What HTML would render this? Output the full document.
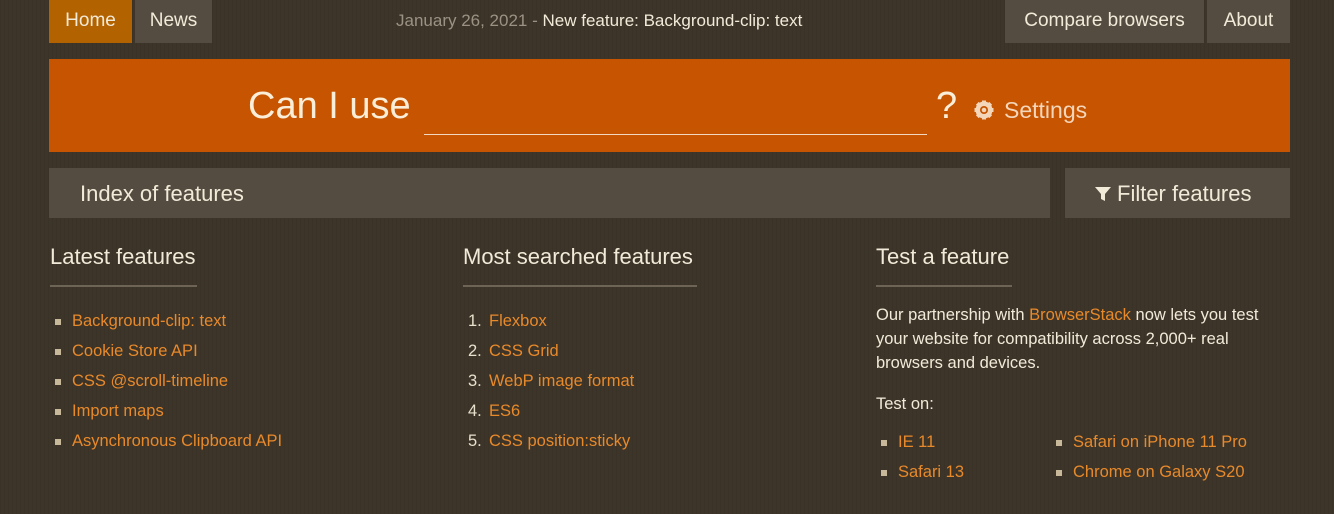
<!DOCTYPE html>
<html><head><meta charset="utf-8"><style>
*{margin:0;padding:0;box-sizing:border-box}
body{width:1334px;height:514px;overflow:hidden;background:#3d3529;font-family:"Liberation Sans",sans-serif;color:#f2ead8;position:relative;
background-image:repeating-linear-gradient(90deg,rgba(0,0,0,.06) 0 1px,transparent 1px 4px);}
.a{position:absolute}
.box{background:#544c40;}
a{color:#e8892a;text-decoration:none}
.nav{height:43px;top:0;font-size:19px;line-height:42px;text-align:center;color:#f2ead8}
h2{font-size:22px;position:absolute;top:244px;color:#f2ead8;font-weight:normal}
.ul{position:absolute;top:285px;height:2px;background:#6d6456}
ul,ol{position:absolute;list-style:none;font-size:16.5px}
li{height:30px;line-height:20px;position:relative}
ul li::before{content:"";position:absolute;left:-17px;top:8px;width:6px;height:6px;background:#c8b99a}
ol li span{position:absolute;left:-21px;color:#e8e0cc}
</style></head><body>
<div class="a nav" style="left:49px;width:83px;background:#b36200">Home</div>
<div class="a nav box" style="left:135px;width:77px">News</div>
<div class="a" style="left:396px;top:10px;font-size:17px;line-height:22px"><span style="color:#9b9283">January 26, 2021 -</span> New feature: Background-clip: text</div>
<div class="a nav box" style="left:1005px;width:199px">Compare browsers</div>
<div class="a nav box" style="left:1207px;width:83px">About</div>
<div class="a" style="left:49px;top:59px;width:1241px;height:93px;background:#c65400"></div>
<div class="a" style="left:248px;top:84px;font-size:38px;line-height:44px;color:#fbeed8">Can I use</div>
<div class="a" style="left:424px;top:134px;width:503px;height:1px;background:#f2d8c0"></div>
<div class="a" style="left:936px;top:84px;font-size:38px;line-height:44px;color:#fbeed8">?</div>
<div class="a" style="left:974px;top:96px;font-size:23px;line-height:28px;color:#f4d6bb"><svg width="20" height="20" viewBox="0 0 20 20" style="vertical-align:-2px;margin-right:10px"><circle cx="10" cy="10" r="6.5" fill="none" stroke="#f4d6bb" stroke-width="4"/><g stroke="#f4d6bb" stroke-width="4"><line x1="10" y1="0.5" x2="10" y2="19.5"/><line x1="0.5" y1="10" x2="19.5" y2="10"/><line x1="3.3" y1="3.3" x2="16.7" y2="16.7"/><line x1="16.7" y1="3.3" x2="3.3" y2="16.7"/></g><circle cx="10" cy="10" r="4" fill="#c65400"/><circle cx="10" cy="10" r="2.3" fill="#f4d6bb"/></svg>Settings</div>
<div class="a box" style="left:49px;top:168px;width:1001px;height:50px;font-size:22px;line-height:52px;padding-left:31px">Index of features</div>
<div class="a box" style="left:1065px;top:168px;width:225px;height:50px;font-size:22px;line-height:52px;padding-left:30px"><svg width="16" height="16" viewBox="0 0 16 16" style="vertical-align:-1px;margin-right:6px"><path d="M0 1h16L10 8v7l-4-2V8z" fill="#f2ead8"/></svg>Filter features</div>
<h2 style="left:50px">Latest features</h2><div class="ul" style="left:50px;width:147px"></div>
<h2 style="left:463px">Most searched features</h2><div class="ul" style="left:463px;width:234px"></div>
<h2 style="left:876px">Test a feature</h2><div class="ul" style="left:876px;width:136px"></div>
<ul style="left:72px;top:311px"><li><a>Background-clip: text</a></li><li><a>Cookie Store API</a></li><li><a>CSS @scroll-timeline</a></li><li><a>Import maps</a></li><li><a>Asynchronous Clipboard API</a></li></ul>
<ol style="left:489px;top:311px"><li><span>1.</span><a>Flexbox</a></li><li><span>2.</span><a>CSS Grid</a></li><li><span>3.</span><a>WebP image format</a></li><li><span>4.</span><a>ES6</a></li><li><span>5.</span><a>CSS position:sticky</a></li></ol>
<div class="a" style="left:876px;top:303px;width:430px;font-size:16.5px;line-height:24px;white-space:nowrap">Our partnership with <a>BrowserStack</a> now lets you test<br>your website for compatibility across 2,000+ real<br>browsers and devices.</div>
<div class="a" style="left:876px;top:392px;font-size:16.5px;line-height:24px">Test on:</div>
<ul style="left:898px;top:432px"><li><a>IE 11</a></li><li><a>Safari 13</a></li></ul>
<ul style="left:1073px;top:432px"><li><a>Safari on iPhone 11 Pro</a></li><li><a>Chrome on Galaxy S20</a></li></ul>
</body></html>
